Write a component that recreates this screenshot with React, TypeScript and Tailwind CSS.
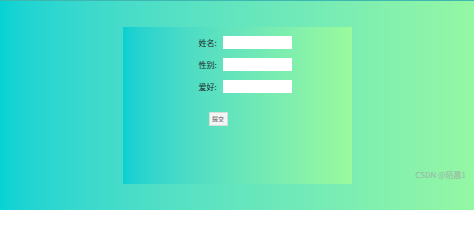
const fields = ["姓名:", "性别:", "爱好:"];

const App = () => {
  return (
    <div
      className="relative h-[210px] w-full overflow-hidden border-t border-[#3eb7b0] bg-gradient-to-r from-[#06d2d4] to-[#94f7a3] pt-[26px]"
      style={{ fontFamily: '"Noto Sans CJK SC", "Liberation Sans", sans-serif' }}
    >
      <div className="mx-auto h-[157px] w-[229px] bg-gradient-to-r from-[#0bcfd2] to-[#9afa9c] pt-[9px]">
        <div className="flex flex-col gap-[9px]">
          {fields.map((label) => (
            <div key={label} className="flex h-[13px] items-center pl-[76px]">
              <span className="w-[24px] text-[8px] leading-none text-[#1d2b2b]">{label}</span>
              <input
                type="text"
                className="h-[13px] w-[69px] bg-white outline-none"
              />
            </div>
          ))}
        </div>
        <div className="mt-[19px] pl-[86px]">
          <button className="flex h-[14px] w-[19px] items-center justify-center border border-[#d6dedc] bg-[#f3f4f4] text-[6px] leading-none text-[#555]">
            提交
          </button>
        </div>
      </div>
      <span className="absolute bottom-[31px] right-[8px] text-[8px] leading-none text-[#9cb2a8]">
        CSDN @陌晨1
      </span>
    </div>
  );
};

export default App;
